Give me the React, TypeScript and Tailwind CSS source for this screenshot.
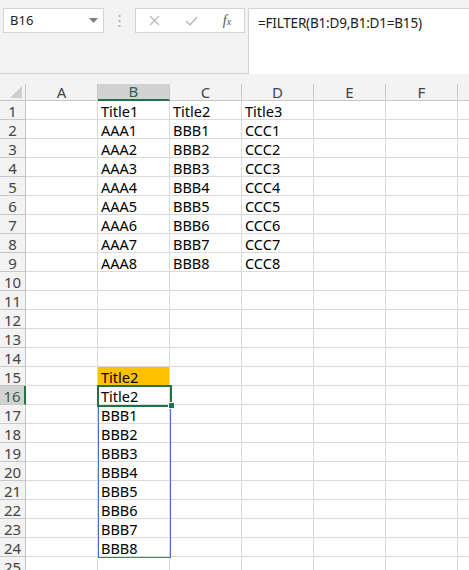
import React from 'react';

const COLS = ['A', 'B', 'C', 'D', 'E', 'F', ''];
const WIDTHS = ['w-[72px]', 'w-[72px]', 'w-[72px]', 'w-[72px]', 'w-[72px]', 'w-[72px]', 'w-[20px]'];

function cellValue(row: number, col: number): string {
  if (row === 1) {
    if (col === 1) return 'Title1';
    if (col === 2) return 'Title2';
    if (col === 3) return 'Title3';
  }
  if (row >= 2 && row <= 9) {
    const n = row - 1;
    if (col === 1) return 'AAA' + n;
    if (col === 2) return 'BBB' + n;
    if (col === 3) return 'CCC' + n;
  }
  if (col === 1) {
    if (row === 15 || row === 16) return 'Title2';
    if (row >= 17 && row <= 24) return 'BBB' + (row - 16);
  }
  return '';
}

export default function App() {
  const rows = Array.from({ length: 25 }, (_, i) => i + 1);
  return (
    <div className="relative w-[469px] h-[570px] overflow-hidden bg-[#f3f3f3] font-['Noto_Sans','Noto_Sans_CJK_SC',sans-serif] text-black">
      {/* Top bar */}
      <div className="flex items-start h-[74px] pt-[8px] pl-[3px] border-b border-[#d0d0d0]">
        <div className="flex items-center justify-between w-[101px] h-[25px] shrink-0 bg-white border border-[#d4d4d4] pl-[6px] pr-[5px]">
          <span className="text-[13px] text-[#222]">B16</span>
          <svg width="9" height="5" viewBox="0 0 9 5"><path d="M0 0 L9 0 L4.5 5 Z" fill="#808080" /></svg>
        </div>
        <div className="flex items-center justify-center w-[31px] h-[25px] shrink-0">
          <svg width="3" height="12" viewBox="0 0 3 12">
            <rect x="0.5" y="0" width="2" height="2" fill="#b4b4b4" />
            <rect x="0.5" y="5" width="2" height="2" fill="#b4b4b4" />
            <rect x="0.5" y="10" width="2" height="2" fill="#b4b4b4" />
          </svg>
        </div>
        <div className="flex items-center w-[110px] h-[25px] shrink-0 bg-white border border-[#d4d4d4]">
          <div className="w-[37px] flex justify-center">
            <svg width="11" height="11" viewBox="0 0 11 11"><path d="M1 1 L10 10 M10 1 L1 10" stroke="#b8b8b8" strokeWidth="1.2" /></svg>
          </div>
          <div className="w-[37px] flex justify-center">
            <svg width="13" height="10" viewBox="0 0 13 10"><path d="M1 5 L5 9 L12 1" stroke="#b8b8b8" strokeWidth="1.4" fill="none" /></svg>
          </div>
          <div className="w-[34px] flex justify-center">
            <span className="font-['Liberation_Serif',serif] italic text-[14px] text-[#555] leading-none">f<span className="text-[10px]">x</span></span>
          </div>
        </div>
        <div className="ml-[3px] flex-1 h-[66px] bg-white border-l border-t border-[#d4d4d4] pl-[9px] pt-[5px] leading-none">
          <span className="text-[13.5px] text-[#222] tracking-[-0.2px] leading-none">=FILTER(B1:D9,B1:D1=B15)</span>
        </div>
      </div>

      {/* Grid */}
      <div className="mt-[10px]">
        {/* Column header row */}
        <div className="flex h-[17px]">
          <div className="relative w-[26px] h-[17px] shrink-0 border-r border-b border-[#c8c8c8] bg-[#f3f3f3]">
            <svg className="absolute right-[3px] bottom-[2px]" width="12" height="12" viewBox="0 0 12 12"><path d="M12 0 L12 12 L0 12 Z" fill="#cfcfcf" /></svg>
          </div>
          {COLS.map((c, i) => (
            <div
              key={i}
              className={`${WIDTHS[i]} h-[17px] shrink-0 flex items-center justify-center text-[15px] leading-none ${
                c === 'B'
                  ? 'bg-[#d2d2d2] border-b-2 border-b-[#217346] border-r border-r-[#c8c8c8] text-[#3a5f48]'
                  : 'border-r border-b border-[#c8c8c8] text-[#444]'
              }`}
            >
              {c}
            </div>
          ))}
        </div>
        {rows.map((r) => (
          <div key={r} className="flex h-[19px]">
            <div
              className={`w-[26px] h-[19px] shrink-0 flex items-center justify-center pt-[2px] text-[15px] leading-none ${
                r === 16
                  ? 'bg-[#d2d2d2] border-r-2 border-r-[#217346] border-b border-b-[#c8c8c8] text-[#3a5f48]'
                  : 'bg-[#f3f3f3] border-r border-b border-[#c8c8c8] text-[#444]'
              }`}
            >
              {r}
            </div>
            {COLS.map((c, i) => {
              const v = cellValue(r, i);
              const orange = r === 15 && i === 1;
              return (
                <div
                  key={i}
                  className={`${WIDTHS[i]} h-[19px] shrink-0 border-r border-b border-[#dadada] flex items-center pl-[3px] pt-[3px] text-[14.5px] leading-none whitespace-nowrap overflow-hidden ${
                    orange ? 'bg-[#ffc000]' : 'bg-white'
                  }`}
                >
                  {v}
                </div>
              );
            })}
          </div>
        ))}
      </div>

      {/* Spill range border */}
      <div className="absolute left-[98px] top-[386px] w-[73px] h-[172px] border border-[#4472c4] pointer-events-none" />
      {/* Active cell */}
      <div className="absolute left-[97px] top-[385px] w-[75px] h-[22px] border-2 border-[#217346] pointer-events-none" />
      {/* Fill handle */}
      <div className="absolute left-[168px] top-[402px] w-[7px] h-[7px] bg-[#217346] border border-white pointer-events-none" />
    </div>
  );
}
